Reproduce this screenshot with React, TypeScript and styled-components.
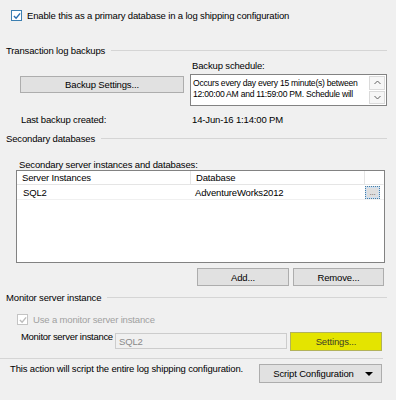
import styled, { createGlobalStyle } from 'styled-components';

const Global = createGlobalStyle`
  html, body {
    margin: 0;
    padding: 0;
    background: #f0f0f0;
  }
  body {
    font-family: "Liberation Sans", Arial, sans-serif;
    font-size: 9.5px;
    letter-spacing: -0.15px;
    color: #000;
  }
`;

const Page = styled.div`
  width: 396px;
  height: 400px;
  overflow: hidden;
  display: flex;
  flex-direction: column;
  background: #f0f0f0;
`;

const CheckRow = styled.label<{ $top: number; $left: number; $disabled?: boolean }>`
  display: flex;
  align-items: center;
  gap: 5px;
  margin-top: ${(p) => p.$top}px;
  margin-left: ${(p) => p.$left}px;
  height: 13px;
  color: ${(p) => (p.$disabled ? '#a0a0a0' : '#000')};
`;

const Box = styled.span<{ $disabled?: boolean }>`
  width: 9px;
  height: 9px;
  border: 1px solid ${(p) => (p.$disabled ? '#c4c4c4' : '#3c7fb1')};
  background: #fff;
  display: flex;
  align-items: center;
  justify-content: center;
  flex: none;
`;

const GroupHeader = styled.div<{ $top: number }>`
  display: flex;
  align-items: center;
  gap: 6px;
  margin-top: ${(p) => p.$top}px;
  margin-left: 6px;
  width: 381px;
  height: 14px;
  white-space: nowrap;
  &::after {
    content: '';
    flex: 1;
    height: 1px;
    background: #d5d5d5;
  }
`;

const BackupGrid = styled.div`
  display: grid;
  grid-template-columns: 164px 197px;
  column-gap: 6px;
  margin-left: 20px;
  margin-top: 1px;
  grid-template-rows: 14px 34px 18px;
  row-gap: 2px;
`;

const Cell = styled.div<{ $col: number; $row: number; $pad?: number; $top?: boolean }>`
  grid-column: ${(p) => p.$col};
  grid-row: ${(p) => p.$row};
  padding-left: ${(p) => p.$pad ?? 0}px;
  display: flex;
  align-items: ${(p) => (p.$top ? 'flex-start' : 'center')};
  white-space: nowrap;
`;

const Button = styled.div<{ $w: number; $h: number; $hl?: boolean; $mt?: number }>`
  width: ${(p) => p.$w}px;
  height: ${(p) => p.$h}px;
  margin-top: ${(p) => p.$mt ?? 0}px;
  box-sizing: border-box;
  border: 1px solid ${(p) => (p.$hl ? '#b2b25a' : '#adadad')};
  background: ${(p) => (p.$hl ? '#e4e400' : '#e1e1e1')};
  display: flex;
  align-items: center;
  justify-content: center;
  color: ${(p) => (p.$hl ? '#3c3c28' : '#000')};
  white-space: nowrap;
  flex: none;
  position: relative;
`;

const Schedule = styled.div`
  width: 197px;
  height: 32px;
  box-sizing: border-box;
  border: 1px solid #828282;
  background: #fff;
  display: flex;
`;

const ScheduleText = styled.div`
  flex: 1;
  padding: 3px 0 0 2px;
  font-size: 8.6px;
  letter-spacing: -0.25px;
  line-height: 11px;
  white-space: nowrap;
  overflow: hidden;
`;

const Scroll = styled.div`
  width: 16px;
  display: flex;
  flex-direction: column;
  padding: 1px 1px 1px 0;
  gap: 1px;
`;

const ScrollBtn = styled.div`
  flex: 1;
  background: #f6f6f6;
  border: 1px solid #dadada;
  display: flex;
  align-items: center;
  justify-content: center;
`;

const Label = styled.div<{ $top: number; $left: number }>`
  margin-top: ${(p) => p.$top}px;
  margin-left: ${(p) => p.$left}px;
  height: 14px;
  display: flex;
  align-items: center;
  white-space: nowrap;
`;

const Table = styled.div`
  margin-left: 16px;
  margin-top: -1px;
  width: 369px;
  height: 93px;
  box-sizing: border-box;
  border: 1px solid #828282;
  background: #fff;
  display: grid;
  grid-template-columns: 174px 174px 1fr;
  grid-template-rows: 14px 15px 1fr;
`;

const HeadCell = styled.div<{ $last?: boolean }>`
  border-right: 1px solid ${(p) => (p.$last ? 'transparent' : '#e5e5e5')};
  border-bottom: 1px solid #e5e5e5;
  padding-left: 5px;
  display: flex;
  align-items: center;
  white-space: nowrap;
`;

const DataCell = styled.div<{ $pad: number }>`
  padding-left: ${(p) => p.$pad}px;
  display: flex;
  align-items: center;
  border-bottom: 1px solid #f0f0f0;
  white-space: nowrap;
`;

const EllipsisCell = styled.div`
  display: flex;
  align-items: center;
  border-bottom: 1px solid #f0f0f0;
`;

const Ellipsis = styled.div`
  width: 15px;
  height: 13px;
  box-sizing: border-box;
  border: 1px dotted #3c7fb1;
  outline: 1px solid #cfe0f2;
  outline-offset: -2px;
  background: #dedede;
  display: flex;
  align-items: flex-end;
  justify-content: center;
  font-size: 8px;
  line-height: 8px;
  color: #555;
  padding-bottom: 1px;
`;

const Empty = styled.div`
  grid-column: 1 / 4;
`;

const ButtonRow = styled.div<{ $top: number }>`
  display: flex;
  gap: 4px;
  margin-top: ${(p) => p.$top}px;
  margin-left: 197px;
`;

const MonitorRow = styled.div`
  display: flex;
  align-items: flex-start;
  margin-top: 6px;
  margin-left: 21px;
  height: 20px;
`;

const MonitorLabel = styled.div`
  width: 94px;
  height: 14px;
  margin-top: -3px;
  letter-spacing: -0.3px;
  display: flex;
  align-items: center;
  white-space: nowrap;
`;

const TextBox = styled.div`
  width: 172px;
  height: 16px;
  margin-top: 1px;
  margin-right: 3px;
  box-sizing: border-box;
  border: 1px solid #cccccc;
  background: #f0f0f0;
  color: #8a8a8a;
  padding-left: 3px;
  display: flex;
  align-items: center;
`;

const Separator = styled.div`
  margin-top: 6px;
  width: 383px;
  height: 1px;
  background: #d5d5d5;
`;

const Footer = styled.div`
  display: flex;
  justify-content: space-between;
  align-items: flex-start;
  margin-top: 5px;
  margin-left: 10px;
  width: 372px;
`;

const FooterText = styled.div`
  height: 8px;
  display: flex;
  align-items: center;
  white-space: nowrap;
`;

const Arrow = styled.span`
  position: absolute;
  right: 8px;
  top: 7px;
  width: 0;
  height: 0;
  border-left: 4px solid transparent;
  border-right: 4px solid transparent;
  border-top: 4px solid #000;
`;

const Check = ({ color }: { color: string }) => (
  <svg width="8" height="8" viewBox="0 0 9 9">
    <path d="M1 4.5 L3.5 7 L8 1.5" fill="none" stroke={color} strokeWidth="1.6" />
  </svg>
);

const Chevron = ({ up }: { up?: boolean }) => (
  <svg width="7" height="5" viewBox="0 0 7 5">
    <path d={up ? 'M0.5 4 L3.5 1 L6.5 4' : 'M0.5 1 L3.5 4 L6.5 1'} fill="none" stroke="#606060" strokeWidth="1" />
  </svg>
);

export default function App() {
  return (
    <>
      <Global />
      <Page>
        <CheckRow $top={9} $left={11}>
          <Box>
            <Check color="#2a6fb0" />
          </Box>
          <span>Enable this as a primary database in a log shipping configuration</span>
        </CheckRow>

        <GroupHeader $top={21}>Transaction log backups</GroupHeader>

        <BackupGrid>
          <Cell $col={2} $row={1} $pad={2}>Backup schedule:</Cell>
          <Cell $col={1} $row={2} $top>
            <Button $w={164} $h={17} $mt={2}>Backup Settings...</Button>
          </Cell>
          <Cell $col={2} $row={2} $top>
            <Schedule>
              <ScheduleText>
                Occurs every day every 15 minute(s) between
                <br />
                12:00:00 AM and 11:59:00 PM. Schedule will
              </ScheduleText>
              <Scroll>
                <ScrollBtn>
                  <Chevron up />
                </ScrollBtn>
                <ScrollBtn>
                  <Chevron />
                </ScrollBtn>
              </Scroll>
            </Schedule>
          </Cell>
          <Cell $col={1} $row={3} $pad={1}>Last backup created:</Cell>
          <Cell $col={2} $row={3} $pad={2}>14-Jun-16 1:14:00 PM</Cell>
        </BackupGrid>

        <GroupHeader $top={3}>Secondary databases</GroupHeader>

        <Label $top={12} $left={19}>Secondary server instances and databases:</Label>

        <Table>
          <HeadCell>Server Instances</HeadCell>
          <HeadCell>Database</HeadCell>
          <HeadCell $last />
          <DataCell $pad={6}>SQL2</DataCell>
          <DataCell $pad={4}>AdventureWorks2012</DataCell>
          <EllipsisCell>
            <Ellipsis>...</Ellipsis>
          </EllipsisCell>
          <Empty />
        </Table>

        <ButtonRow $top={5}>
          <Button $w={92} $h={18}>Add...</Button>
          <Button $w={91} $h={18}>Remove...</Button>
        </ButtonRow>

        <GroupHeader $top={4}>Monitor server instance</GroupHeader>

        <CheckRow $top={9} $left={17} $disabled>
          <Box $disabled>
            <Check color="#bdbdbd" />
          </Box>
          <span>Use a monitor server instance</span>
        </CheckRow>

        <MonitorRow>
          <MonitorLabel>Monitor server instance</MonitorLabel>
          <TextBox>SQL2</TextBox>
          <Button $w={92} $h={19} $hl>Settings...</Button>
        </MonitorRow>

        <Separator />

        <Footer>
          <FooterText>This action will script the entire log shipping configuration.</FooterText>
          <Button $w={123} $h={19}>
            <span style={{ marginRight: 14 }}>Script Configuration</span>
            <Arrow />
          </Button>
        </Footer>
      </Page>
    </>
  );
}
